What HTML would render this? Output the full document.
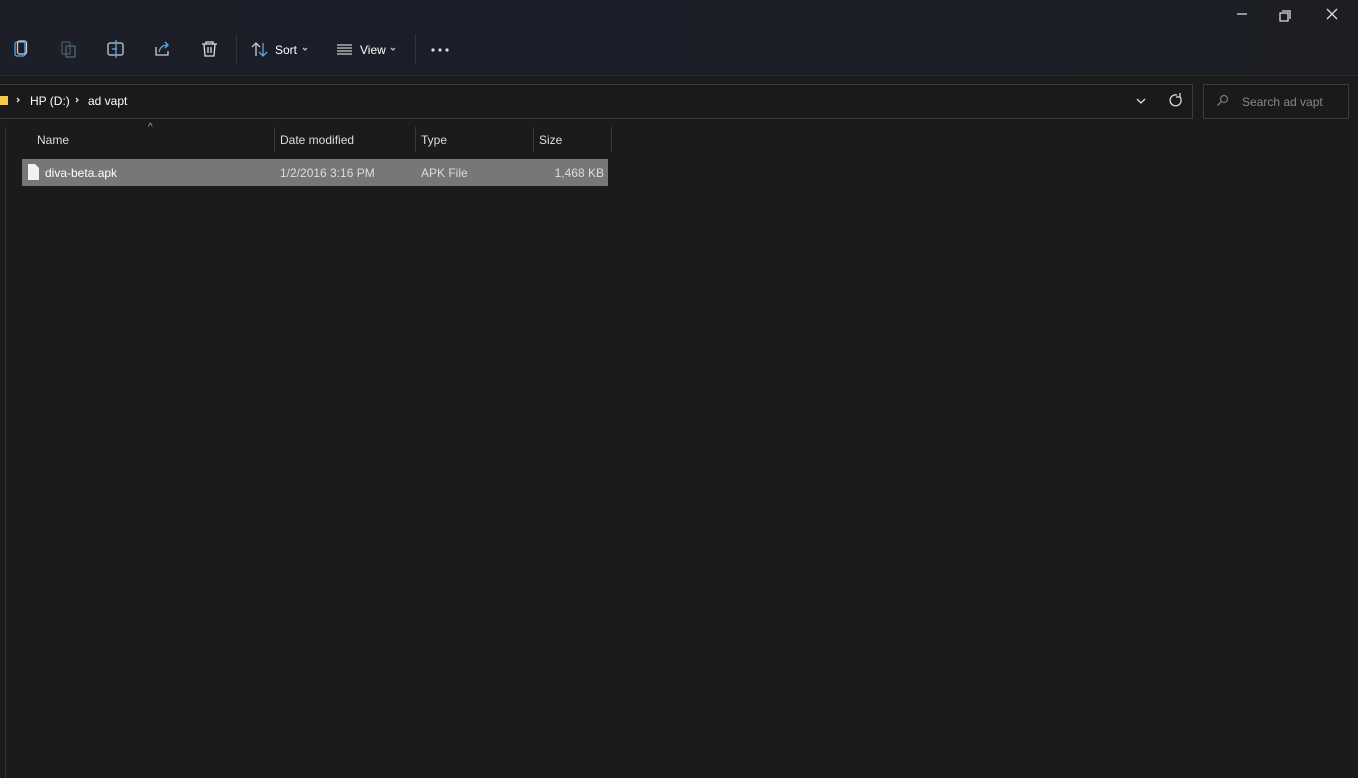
<!DOCTYPE html>
<html><head><style>
body{margin:0;width:1358px;height:778px;background:#1b1b1b;font-family:"Liberation Sans",sans-serif;color:#fff;position:relative;overflow:hidden;font-size:12px}
.tb{position:absolute;left:0;top:0;width:1358px;height:75px;background:linear-gradient(90deg,#1c1f27,#1a1e28 40%,#1c1e24);border-bottom:1px solid #2a2a2a}
.a{position:absolute}
.sep{position:absolute;top:34px;width:1px;height:31px;background:#333}
.box{position:absolute;border:1px solid #3c3c3c;background:#1a1a1a;box-sizing:border-box}
.hd{position:absolute;top:133px;color:#ddd;font-size:12px}
.vl{position:absolute;top:127px;width:1px;height:25px;background:#3a3a3a}
</style></head><body>
<div class="tb"></div>
<svg class="a" style="left:0;top:0" width="1358" height="75">
<g fill="none" stroke-width="1.3">
<rect x="15" y="42" width="10" height="14" rx="2" stroke="#5aa9e6"/><rect x="17.5" y="41" width="9" height="13" rx="2" stroke="#ccc"/>
<rect x="62" y="42" width="8" height="12" rx="1" stroke="#555"/><rect x="66" y="46" width="9" height="11" rx="1" stroke="#4a6a86"/>
<rect x="108" y="43" width="15" height="12" rx="2" stroke="#ccc"/><line x1="116" y1="40" x2="116" y2="58" stroke="#5aa9e6"/><line x1="112" y1="49" x2="117" y2="49" stroke="#5aa9e6"/>
<path d="M156 47v8h12v-4" stroke="#ccc"/><path d="M159 52c1-5 4-7 9-7m-3-3 3 3-3 3" stroke="#5aa9e6"/>
<path d="M202 44h15M206 44v-2h7v2M204 44l1 12h9l1-12M208 47v6M211 47v6" stroke="#ddd"/>
<path d="M256 56V43m-4 4 4-4 4 4" stroke="#ccc"/><path d="M263 43v13m-4-4 4 4 4-4" stroke="#5aa9e6"/>
<path d="M303 48l2 2 2-2M391 48l2 2 2-2" stroke="#bbb"/>
<path d="M337 45h15M337 48h15M337 51h15M337 54h15" stroke="#ccc"/>
<path d="M1237 14h10M1282 11h8v8M1280 13h8v8h-8z" stroke="#ddd"/>
<path d="M1327 9l10 10M1337 9l-10 10" stroke="#ddd"/>
</g>
<circle cx="433" cy="50" r="1.6" fill="#ddd"/><circle cx="440" cy="50" r="1.6" fill="#ddd"/><circle cx="447" cy="50" r="1.6" fill="#ddd"/>
<text x="275" y="54" fill="#fff" font-size="12" font-family="Liberation Sans">Sort</text>
<text x="360" y="54" fill="#fff" font-size="12" font-family="Liberation Sans">View</text>
</svg>
<div class="sep" style="left:236px"></div><div class="sep" style="left:415px"></div>
<div class="box" style="left:-2px;top:84px;width:1195px;height:35px"></div>
<div class="box" style="left:1203px;top:84px;width:146px;height:35px"></div>
<svg class="a" style="left:0;top:84px" width="1358" height="40"><g fill="none" stroke-width="1.3">
<rect x="-2" y="12" width="10" height="9" fill="#f3c94b" stroke="none"/>
<path d="M17 14l2 2-2 2M76 14l2 2-2 2" stroke="#ddd"/>
<path d="M1137 15l4 4 4-4" stroke="#ddd"/>
<path d="M1180 13a5.5 5.5 0 1 1-3-2m3-2v4h-4" stroke="#ddd"/>
<circle cx="1224" cy="15" r="3.5" stroke="#777"/><path d="M1221.5 17.5l-4 4" stroke="#777"/>
</g></svg>
<div class="a" style="left:30px;top:94px;color:#fff">HP (D:)</div>
<div class="a" style="left:88px;top:94px;color:#fff">ad vapt</div>
<div class="a" style="left:1242px;top:95px;color:#888">Search ad vapt</div>
<div class="a" style="left:5px;top:127px;width:1px;height:651px;background:#333"></div>
<div class="hd" style="left:37px">Name</div>
<div class="a" style="left:148px;top:122px;color:#aaa;font-size:10px">^</div>
<div class="vl" style="left:274px"></div><div class="hd" style="left:280px">Date modified</div>
<div class="vl" style="left:415px"></div><div class="hd" style="left:421px">Type</div>
<div class="vl" style="left:533px"></div><div class="hd" style="left:539px">Size</div>
<div class="vl" style="left:611px"></div>
<div class="a" style="left:22px;top:159px;width:586px;height:27px;background:#777"></div>
<svg class="a" style="left:28px;top:164px" width="12" height="16"><path d="M0 0h7l4 4v12H0z" fill="#f2f2f2"/></svg>
<div class="a" style="left:45px;top:166px;color:#fff">diva-beta.apk</div>
<div class="a" style="left:280px;top:166px;color:#ddd">1/2/2016 3:16 PM</div>
<div class="a" style="left:421px;top:166px;color:#ddd">APK File</div>
<div class="a" style="left:500px;width:104px;text-align:right;top:166px;color:#ddd">1,468 KB</div>
</body></html>
